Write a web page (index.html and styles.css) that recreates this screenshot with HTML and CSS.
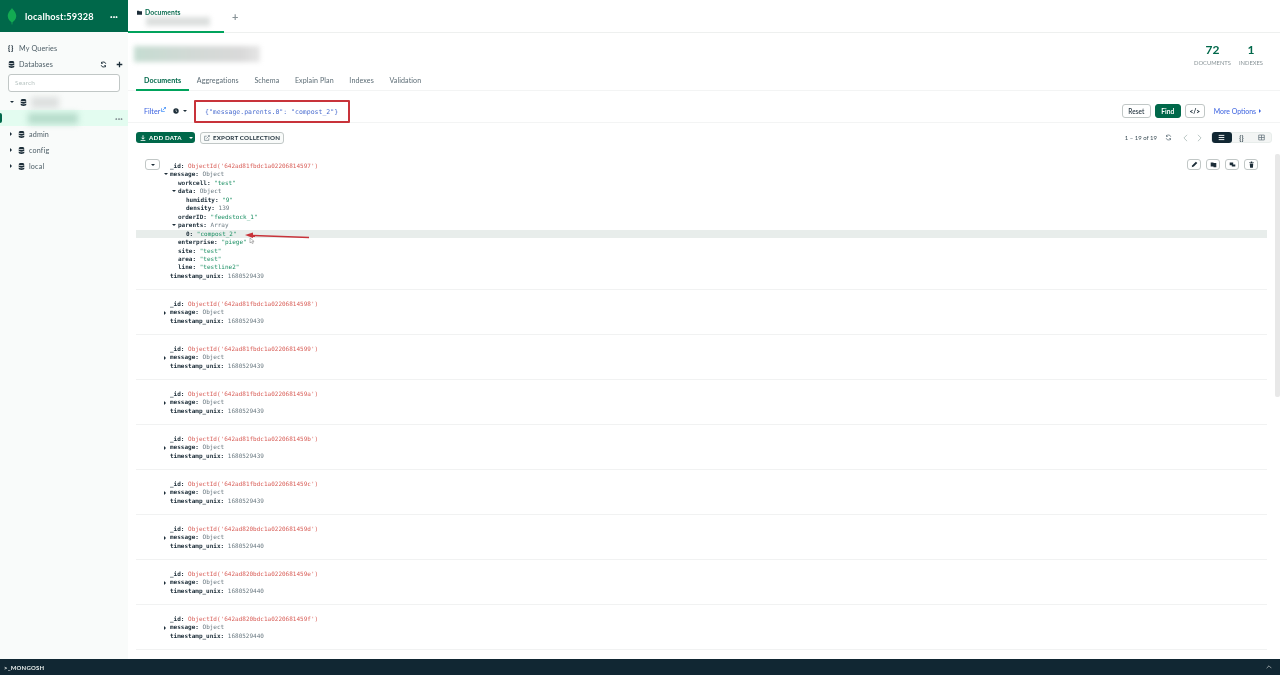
FILE: index.html
```html
<!DOCTYPE html>
<html lang="en">
<head>
<meta charset="utf-8">
<title>MongoDB Compass</title>
<link rel="stylesheet" href="styles.css">
</head>
<body>
<div class="app">
  <aside class="sidebar">
    <div class="conn">
      <svg class="leaf" viewBox="0 0 10 18"><path d="M5 0C6 2 9.500 4.500 9.500 8.500 9.500 12 7 14.200 5.500 15L5.300 17.500H4.700L4.500 15C3 14.200.5 12 .5 8.500.5 4.500 4 2 5 0Z"/></svg>
      <span class="conn-name">localhost:59328</span>
      <span class="dots light">···</span>
    </div>
    <div class="nav-row"><span class="nav-ico braces">{}</span><span>My Queries</span></div>
    <div class="nav-row">
      <svg class="db" viewBox="0 0 8 8"><use href="#db"/></svg>
      <span class="grow">Databases</span>
      <svg class="mini" viewBox="0 0 10 10"><path d="M8.300 4A3.400 3.400 0 0 0 2.300 2.700M1.700 6A3.400 3.400 0 0 0 7.700 7.300" fill="none" stroke="#1c2d38" stroke-width="1.300"/><path d="M1.500 .8v3h3zM8.500 9.200v-3h-3z" fill="#1c2d38"/></svg>
      <svg class="mini plus" viewBox="0 0 10 10"><path d="M5 1v8M1 5h8" stroke="#1c2d38" stroke-width="1.800"/></svg>
    </div>
    <div class="search">Search</div>
    <div class="tree">
      <div class="db-row"><span class="tri down"></span><svg class="db" viewBox="0 0 8 8"><use href="#db"/></svg><span class="smudge s-db"></span></div>
      <div class="coll-row"><span class="marker"></span><span class="smudge s-coll"></span><span class="dots">···</span></div>
      <div class="db-row"><span class="tri"></span><svg class="db" viewBox="0 0 8 8"><use href="#db"/></svg><span>admin</span></div>
      <div class="db-row"><span class="tri"></span><svg class="db" viewBox="0 0 8 8"><use href="#db"/></svg><span>config</span></div>
      <div class="db-row"><span class="tri"></span><svg class="db" viewBox="0 0 8 8"><use href="#db"/></svg><span>local</span></div>
    </div>
  </aside>

  <main class="main">
    <div class="tabbar">
      <div class="tab">
        <div class="tab-title"><svg class="folder" viewBox="0 0 8 7"><path d="M0 .5h3l1 1h4V7H0z"/></svg>Documents</div>
        <span class="smudge s-tab"></span>
      </div>
      <span class="tab-add">+</span>
    </div>

    <div class="title-row">
      <span class="smudge s-title"></span>
      <div class="stats">
        <div class="stat"><b>72</b><span>DOCUMENTS</span></div>
        <div class="stat"><b>1</b><span>INDEXES</span></div>
      </div>
    </div>

    <nav class="tabs">
      <span class="sub active">Documents</span>
      <span class="sub">Aggregations</span>
      <span class="sub">Schema</span>
      <span class="sub">Explain Plan</span>
      <span class="sub">Indexes</span>
      <span class="sub">Validation</span>
    </nav>

    <div class="query">
      <span class="filter">Filter<svg class="ext" viewBox="0 0 6 6"><path d="M.5 1.500v4h4M2 4 5.500.5M3.500.5h2v2" fill="none" stroke="#016bf8" stroke-width=".7"/></svg></span>
      <svg class="clock" viewBox="0 0 10 10"><circle cx="5" cy="5" r="4.500" fill="#1c2d38"/><path d="M5 2.500V5.300L7 6.300" fill="none" stroke="#fff" stroke-width="1"/></svg>
      <span class="tri down small"></span>
      <div class="query-box">{"message.parents.0": "compost_2"}</div>
      <div class="query-actions">
        <span class="btn">Reset</span>
        <span class="btn find">Find</span>
        <span class="btn code">&lt;/&gt;</span>
        <span class="more">More Options<span class="tri blue"></span></span>
      </div>
    </div>

    <div class="toolbar">
      <span class="add"><svg class="dl" viewBox="0 0 10 10"><path d="M5 .5v6M2.500 4.500 5 7l2.500-2.500M1 9.300h8" fill="none" stroke="#fff" stroke-width="1.400"/></svg>ADD DATA<span class="tri down white"></span></span>
      <span class="export"><svg class="dl" viewBox="0 0 10 10"><path d="M8 5.500V9H1V2h3.500M4 6l5-5M6.500 1H9v2.500" fill="none" stroke="#5c6c75" stroke-width="1"/></svg>EXPORT COLLECTION</span>
      <div class="pager">
        <span>1 – 19 of 19</span>
        <svg class="refresh" viewBox="0 0 10 10"><path d="M8.300 4A3.400 3.400 0 0 0 2.300 2.700M1.700 6A3.400 3.400 0 0 0 7.700 7.300" fill="none" stroke="#5c6c75" stroke-width="1"/><path d="M1.500 1v3h3zM8.500 9v-3h-3z" fill="#5c6c75"/></svg>
        <svg class="chev" viewBox="0 0 6 10"><path d="M5 1 1 5l4 4" fill="none" stroke="#b8c4c2" stroke-width="1.200"/></svg>
        <svg class="chev" viewBox="0 0 6 10"><path d="M1 1l4 4-4 4" fill="none" stroke="#b8c4c2" stroke-width="1.200"/></svg>
        <div class="views">
          <span class="view on"><svg viewBox="0 0 10 10"><path d="M1 2h8M1 5h8M1 8h8" stroke="#fff" stroke-width="1.300"/></svg></span>
          <span class="view txt">{}</span>
          <span class="view"><svg viewBox="0 0 10 10"><path d="M1 1.500h8v7H1zM1 5h8M5 1.500v7" fill="none" stroke="#5c6c75" stroke-width="1"/></svg></span>
        </div>
      </div>
    </div>

    <div class="list">
      <section class="doc">
        <span class="expand"><span class="tri down"></span></span>
        <div class="actions">
          <span class="act"><svg viewBox="0 0 10 10"><path d="M1 9l1-3 5-5 2 2-5 5z" fill="#1c2d38"/></svg></span>
          <span class="act"><svg viewBox="0 0 10 10"><path d="M1 2h4v6H1zM5 3h4v6H5z" fill="#1c2d38"/></svg></span>
          <span class="act"><svg viewBox="0 0 10 10"><path d="M1 2h5v4H1zM4 5h5v3H4z" fill="#1c2d38"/></svg></span>
          <span class="act"><svg viewBox="0 0 10 10"><path d="M1.500 2h7v1h-7zM2.500 3.500h5L7 9.500H3zM4 .8h2V2H4z" fill="#1c2d38"/></svg></span>
        </div>
        <div class="ln"><b>_id:</b> <i class="oid">ObjectId('642ad81fbdc1a02206814597')</i></div>
        <div class="ln car"><b>message:</b> <i class="typ">Object</i></div>
        <div class="ln l1"><b>workcell:</b> <i class="str">"test"</i></div>
        <div class="ln l1 car"><b>data:</b> <i class="typ">Object</i></div>
        <div class="ln l2"><b>humidity:</b> <i class="str">"9"</i></div>
        <div class="ln l2"><b>density:</b> <i class="num">139</i></div>
        <div class="ln l1"><b>orderID:</b> <i class="str">"feedstock_1"</i></div>
        <div class="ln l1 car"><b>parents:</b> <i class="typ">Array</i></div>
        <div class="ln l2 hit"><b>0:</b> <i class="str">"compost_2"</i></div>
        <div class="ln l1"><b>enterprise:</b> <i class="str">"piege"</i></div>
        <div class="ln l1"><b>site:</b> <i class="str">"test"</i></div>
        <div class="ln l1"><b>area:</b> <i class="str">"test"</i></div>
        <div class="ln l1"><b>line:</b> <i class="str">"testline2"</i></div>
        <div class="ln"><b>timestamp_unix:</b> <i class="num">1680529439</i></div>
        <svg class="arrow" viewBox="0 0 66 14"><path d="M65 7.500 9 5.500" stroke="#c8333a" stroke-width="1.300" fill="none"/><path d="M1 5 9 2.500 9 8z" fill="#c8333a"/><path d="M6 8v5l1.300-1.200 1 1.800 1-.5-1-1.700h1.800z" fill="#fff" stroke="#777" stroke-width=".5"/></svg>
      </section>
      <section class="doc"><div class="ln"><b>_id:</b> <i class="oid">ObjectId('642ad81fbdc1a02206814598')</i></div><div class="ln car side"><b>message:</b> <i class="typ">Object</i></div><div class="ln"><b>timestamp_unix:</b> <i class="num">1680529439</i></div></section>
      <section class="doc"><div class="ln"><b>_id:</b> <i class="oid">ObjectId('642ad81fbdc1a02206814599')</i></div><div class="ln car side"><b>message:</b> <i class="typ">Object</i></div><div class="ln"><b>timestamp_unix:</b> <i class="num">1680529439</i></div></section>
      <section class="doc"><div class="ln"><b>_id:</b> <i class="oid">ObjectId('642ad81fbdc1a0220681459a')</i></div><div class="ln car side"><b>message:</b> <i class="typ">Object</i></div><div class="ln"><b>timestamp_unix:</b> <i class="num">1680529439</i></div></section>
      <section class="doc"><div class="ln"><b>_id:</b> <i class="oid">ObjectId('642ad81fbdc1a0220681459b')</i></div><div class="ln car side"><b>message:</b> <i class="typ">Object</i></div><div class="ln"><b>timestamp_unix:</b> <i class="num">1680529439</i></div></section>
      <section class="doc"><div class="ln"><b>_id:</b> <i class="oid">ObjectId('642ad81fbdc1a0220681459c')</i></div><div class="ln car side"><b>message:</b> <i class="typ">Object</i></div><div class="ln"><b>timestamp_unix:</b> <i class="num">1680529439</i></div></section>
      <section class="doc"><div class="ln"><b>_id:</b> <i class="oid">ObjectId('642ad820bdc1a0220681459d')</i></div><div class="ln car side"><b>message:</b> <i class="typ">Object</i></div><div class="ln"><b>timestamp_unix:</b> <i class="num">1680529440</i></div></section>
      <section class="doc"><div class="ln"><b>_id:</b> <i class="oid">ObjectId('642ad820bdc1a0220681459e')</i></div><div class="ln car side"><b>message:</b> <i class="typ">Object</i></div><div class="ln"><b>timestamp_unix:</b> <i class="num">1680529440</i></div></section>
      <section class="doc"><div class="ln"><b>_id:</b> <i class="oid">ObjectId('642ad820bdc1a0220681459f')</i></div><div class="ln car side"><b>message:</b> <i class="typ">Object</i></div><div class="ln"><b>timestamp_unix:</b> <i class="num">1680529440</i></div></section>
      <span class="thumb"></span>
    </div>
  </main>

  <footer class="shell">
    <span>&gt;_MONGOSH</span>
    <svg class="up" viewBox="0 0 10 6"><path d="M1 5l4-4 4 4" fill="none" stroke="#c1c7c6" stroke-width="1.200"/></svg>
  </footer>
</div>
<svg class="defs" aria-hidden="true"><symbol id="db" viewBox="0 0 8 8"><path d="M.8 1.300C.8.500 2.200 0 4 0s3.200.5 3.200 1.300S5.800 2.600 4 2.600.8 2.100.8 1.300ZM.8 2.500C1.500 3.200 2.700 3.400 4 3.400s2.500-.2 3.200-.9v1.600C7.200 4.900 5.800 5.300 4 5.300S.8 4.900.8 4.100ZM.8 5.200C1.500 5.900 2.700 6.100 4 6.100s2.500-.2 3.200-.9v1.500C7.200 7.500 5.800 8 4 8S.8 7.500.8 6.700Z" fill="#1c2d38"/></symbol></svg>
</body>
</html>
```
FILE: styles.css
```css
* { box-sizing: border-box; }
html, body { margin: 0; height: 100%; }
body { font-family: "Lato", "Inter", sans-serif; color: #1c2d38; background: #fff; overflow: hidden; }
.defs { display: none; }
.app { display: grid; grid-template-columns: 128px 1fr; grid-template-rows: 659px 16px; width: 1280px; height: 675px; filter: blur(.35px); }

/* sidebar */
.sidebar { background: #f9fbfa; font-size: 7.2px; color: #4d5d66; letter-spacing: .15px; }
.conn { height: 32px; background: #00684a; display: flex; align-items: center; padding: 0 10px 0 7px; color: #fff; }
.leaf { width: 10px; height: 17px; fill: #13aa52; }
.conn-name { margin-left: 8px; font-size: 9.200px; font-weight: 700; letter-spacing: .2px; flex: 1; }
.dots { font-size: 9px; font-weight: 900; line-height: 1; color: #889397; }
.dots.light { color: #fff; }
.nav-row { height: 16px; display: flex; align-items: center; padding: 0 5px 0 8px; gap: 4px; }
.conn + .nav-row { margin-top: 8px; }
.nav-ico { width: 7px; font-weight: 900; font-size: 7.500px; color: #1c2d38; letter-spacing: .6px; }
.grow { flex: 1; }
.db { width: 7px; height: 7px; flex: none; }
.mini { width: 7px; height: 7px; margin-left: 2px; }
.mini.plus { margin-left: 5px; }
.search { margin: 2px 8px 0; height: 18px; border: 1px solid #c1c7c6; border-radius: 3px; background: #fff; color: #b8c4c2; font-size: 6.500px; line-height: 16px; padding-left: 6px; }
.tree { margin-top: 2px; }
.db-row { height: 16px; display: flex; align-items: center; padding-left: 10px; gap: 6.500px; position: relative; }
.db-row .db { margin-left: -1px; margin-right: -2px; }
.coll-row { height: 16px; display: flex; align-items: center; background: #e3fcf0; padding: 0 5px 0 28px; position: relative; justify-content: space-between; }
.marker { position: absolute; left: 0; top: 3px; width: 2px; height: 10px; background: #00684a; border-radius: 0 2px 2px 0; }
.smudge { display: block; background: #d5d9d8; }
.s-db { width: 28px; height: 11px; background: #dcdfde; filter: blur(3px); }
.s-coll { width: 50px; height: 11px; background: #b6dccb; filter: blur(3px); }
.s-tab { width: 64px; height: 9px; margin: 1px 0 0 9px; background: #dcdfde; filter: blur(2.500px); }
.s-title { width: 126px; height: 16px; margin-top: 2px; background: linear-gradient(90deg, #c5dcd1, #d3d9d6 50%, #d9d9d9 85%, #e6e6e6); filter: blur(2.500px); }

/* tri */
.tri { display: inline-block; width: 0; height: 0; border-left: 2.500px solid #1c2d38; border-top: 2px solid transparent; border-bottom: 2px solid transparent; }
.tri.down { border-left: 2px solid transparent; border-right: 2px solid transparent; border-top: 2.500px solid #1c2d38; border-bottom: 0; }
.tri.white { border-top-color: #fff; margin-left: 5px; }
.tri.blue { border-left-color: #3b62e0; margin-left: 3px; }

/* main */
.main { display: flex; flex-direction: column; min-width: 0; background: #fff; }
.tabbar { height: 33px; display: flex; align-items: center; border-bottom: 1px solid #eef0ef; }
.tab { width: 96px; height: 33px; border-bottom: 2px solid #00a35c; margin-bottom: -1px; padding: 8px 0 0 9px; }
.tab-title { display: flex; align-items: center; gap: 3px; font-size: 6.800px; font-weight: 700; color: #00684a; letter-spacing: .1px; }
.folder { width: 5px; height: 5px; fill: #1c2d38; }
.tab-add { margin-left: 8px; font-size: 11px; font-weight: 700; color: #889397; line-height: 1; }
.title-row { height: 39px; display: flex; justify-content: space-between; align-items: flex-start; padding: 11px 17px 0 6px; }
.stats { display: flex; gap: 8px; }
.stat { display: flex; flex-direction: column; align-items: center; }
.stat b { font-size: 12px; line-height: 12px; color: #00684a; font-weight: 700; }
.stat span { font-size: 5.800px; color: #889397; line-height: 8px; margin-top: 3px; }
.tabs { height: 19px; display: flex; gap: 15.600px; padding: 0 0 0 16px; border-bottom: 1px solid #f3f4f4; font-size: 7.100px; color: #5c6c75; align-items: stretch; letter-spacing: .1px; }
.sub { padding: 4px 0 0; }
.active { color: #00684a; font-weight: 700; border-bottom: 2px solid #00a35c; margin: 0 -8px -1px; padding: 4px 8px 0; }
.query { height: 32px; display: flex; align-items: center; padding: 9px 19px 0 16px; border-bottom: 1px solid #f3f4f4; }
.filter { color: #3b62e0; font-size: 7.100px; display: flex; align-items: flex-start; width: 27px; }
.ext { width: 5px; height: 5px; margin-left: 1px; }
.clock { width: 6px; height: 6px; margin-left: 2px; margin-right: 4px; }
.query .tri.small { margin-right: 7px; }
.query-box { width: 156px; height: 23px; border: 2px solid #c8333a; border-radius: 1px; font: 6.500px/20px "DejaVu Sans Mono", monospace; color: #4d6fd0; padding-left: 9px; background: #fff; }
.query-actions { margin-left: auto; display: flex; align-items: center; gap: 4px; }
.btn { height: 14px; width: 29px; text-align: center; border: 1px solid #c1c7c6; border-radius: 3px; font-size: 6.600px; font-weight: 500; line-height: 12px; background: #fff; color: #1c2d38; }
.find { width: 26px; background: #00684a; border-color: #00684a; color: #fff; font-weight: 700; }
.code { font-weight: 900; width: 20px; }
.more { color: #3b62e0; font-size: 6.900px; margin-left: 5px; display: flex; align-items: center; }
.toolbar { height: 28px; display: flex; align-items: center; padding: 1px 8px 0 8px; font-size: 6.200px; font-weight: 700; gap: 5px; flex: none; }
.add, .export { height: 11px; display: flex; align-items: center; border-radius: 3px; gap: 2px; letter-spacing: .2px; }
.add { background: #00684a; color: #fff; width: 59px; padding-left: 4px; }
.export { border: 1px solid #c1c7c6; width: 84px; padding-left: 3px; height: 12px; background: #f9fbfa; }
.dl { width: 6px; height: 6px; margin-right: 1px; }
.pager { margin-left: auto; display: flex; align-items: center; font-size: 6px; font-weight: 400; color: #3d4f58; }
.refresh { width: 7px; height: 7px; margin: 0 3px 0 8px; }
.chev { width: 5px; height: 8px; margin-left: 8px; }
.chev + .chev { margin-left: 9px; }
.views { display: flex; width: 61px; height: 11px; margin-left: 9px; border-radius: 3px; background: #f3f5f4; border: 1px solid #e8edeb; }
.view { flex: 1; display: flex; align-items: center; justify-content: center; font-size: 7px; font-weight: 700; }
.view svg { width: 7px; height: 7px; }
.view.on { background: #112733; border-radius: 3px; margin: -1px 0; }
.list { flex: 1; min-height: 0; overflow: hidden; position: relative; padding: 1px 13px 0 8px; font: 6px/8.460px "DejaVu Sans Mono", monospace; }
.doc { position: relative; padding: 10px 0 8.620px 34px; border-bottom: 1px solid #f1f2f2; }
.ln { white-space: pre; position: relative; }
.ln b { color: #1c2d38; font-weight: 700; }
.ln i { font-style: normal; }
.oid { color: #d9605a; }
.typ, .num { color: #6b7a82; }
.str { color: #1b8f63; }
.l1 { padding-left: 8px; }
.l2 { padding-left: 16px; }
.car::before { content: ""; position: absolute; top: 3px; margin-left: -6.500px; border-left: 2px solid transparent; border-right: 2px solid transparent; border-top: 2.500px solid #1c2d38; }
.side::before { border: 0; border-left: 2.500px solid #1c2d38; border-top: 2px solid transparent; border-bottom: 2px solid transparent; top: 2.500px; margin-left: -6px; }
.hit { margin-left: -34px; padding-left: 50px; background: #e8edeb; }
.expand { position: absolute; left: 9px; top: 7px; width: 15px; height: 11px; border: 1px solid #c1c7c6; border-radius: 3px; display: flex; align-items: center; justify-content: center; }
.actions { position: absolute; right: 9px; top: 7px; display: flex; gap: 5px; }
.act { width: 14px; height: 11px; border: 1px solid #c1c7c6; border-radius: 3px; display: flex; align-items: center; justify-content: center; }
.act svg { width: 7px; height: 7px; }
.arrow { position: absolute; left: 108px; top: 78px; width: 66px; height: 14px; }
.thumb { position: absolute; right: 0; top: 3px; width: 5px; height: 243px; background: #e8e8e8; border-radius: 2px; }

/* shell */
.shell { grid-column: 1 / 3; background: #112733; color: #e8edeb; display: flex; align-items: center; justify-content: space-between; padding: 0 8px 0 4px; font-size: 6px; font-weight: 700; letter-spacing: .2px; }
.up { width: 6px; height: 4px; }
```
